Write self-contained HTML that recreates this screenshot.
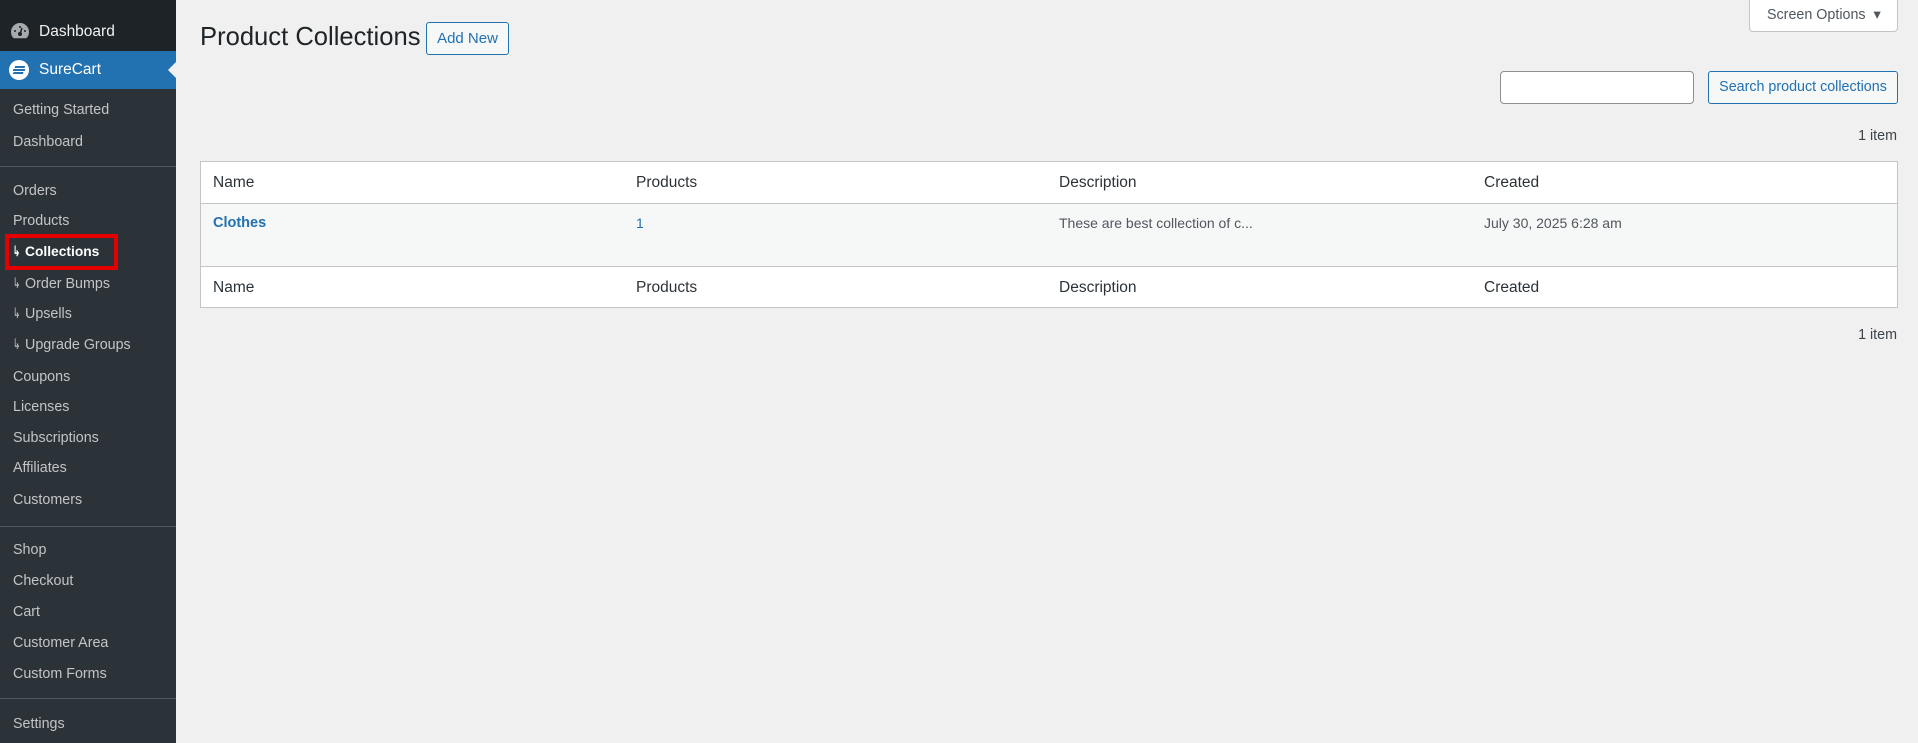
<!DOCTYPE html>
<html><head><meta charset="utf-8"><style>
*{box-sizing:border-box;margin:0;padding:0}
body{width:1918px;height:743px;overflow:hidden;background:#f0f0f1;font-family:"Liberation Sans",sans-serif;position:relative;color:#3c434a}
#sb{position:absolute;left:0;top:0;width:176px;height:743px;background:#2c3338}
#top{position:absolute;left:0;top:0;width:176px;height:51px;background:#1d2327}
.t{position:absolute;font-size:16px;white-space:nowrap}
.m{position:absolute;left:13px;font-size:14.3px;color:#c3c4c7;white-space:nowrap;transform:translateY(-50%)}
.a{display:inline-block;transform:scaleX(0.6);transform-origin:left;width:12px}
.sep{position:absolute;left:0;width:176px;height:1px;background:#50575e}
.c{position:absolute;font-size:16px;transform:translateY(-50%);white-space:nowrap}
</style></head><body>
<div id="sb"></div><div id="top"></div>
<svg style="position:absolute;left:10px;top:22px" width="20" height="18" viewBox="0 0 20 18"><path d="M10 1A9 9 0 0 0 1 10c0 2.5 1 4.7 2.6 6.3h12.8A9 9 0 0 0 19 10 9 9 0 0 0 10 1z" fill="#a7aaad"/><circle cx="10" cy="12" r="2" fill="#1d2327"/><path d="M10 12l2-6" stroke="#1d2327" stroke-width="1.5"/><circle cx="5" cy="9" r="1" fill="#1d2327"/><circle cx="15" cy="9" r="1" fill="#1d2327"/><circle cx="10" cy="5" r="1" fill="#1d2327"/></svg>
<div class="t" style="left:39px;top:23px;color:#f0f0f1;font-size:15.5px">Dashboard</div>
<div style="position:absolute;left:0;top:51px;width:176px;height:38px;background:#2271b1"></div>
<svg style="position:absolute;left:8px;top:59px" width="22" height="22" viewBox="0 0 22 22"><circle cx="11" cy="11" r="10" fill="#fff"/><path d="M6 8h10M5 11h12M6 14h10" stroke="#2271b1" stroke-width="2" transform="skewX(-15) translate(3 0)"/></svg>
<div class="t" style="left:39px;top:61px;color:#fff;font-size:15.5px">SureCart</div>
<div style="position:absolute;left:168px;top:62px;width:0;height:0;border-top:8px solid transparent;border-bottom:8px solid transparent;border-right:8px solid #f0f0f1"></div>
<div class="m" style="top:110px">Getting Started</div>
<div class="m" style="top:142px">Dashboard</div>
<div class="sep" style="top:166px"></div>
<div class="m" style="top:191px">Orders</div>
<div class="m" style="top:221px">Products</div>
<div class="m" style="top:252px;color:#fff;font-weight:bold;font-size:13.8px"><span class="a">↳</span>Collections</div>
<div style="position:absolute;left:5px;top:234px;width:113px;height:36px;border:4px solid #e50000"></div>
<div class="m" style="top:284px"><span class="a">↳</span>Order Bumps</div>
<div class="m" style="top:314px"><span class="a">↳</span>Upsells</div>
<div class="m" style="top:345px"><span class="a">↳</span>Upgrade Groups</div>
<div class="m" style="top:377px">Coupons</div>
<div class="m" style="top:407px">Licenses</div>
<div class="m" style="top:438px">Subscriptions</div>
<div class="m" style="top:468px">Affiliates</div>
<div class="m" style="top:500px">Customers</div>
<div class="sep" style="top:526px"></div>
<div class="m" style="top:550px">Shop</div>
<div class="m" style="top:581px">Checkout</div>
<div class="m" style="top:612px">Cart</div>
<div class="m" style="top:643px">Customer Area</div>
<div class="m" style="top:674px">Custom Forms</div>
<div class="sep" style="top:698px"></div>
<div class="m" style="top:724px">Settings</div>

<div class="t" style="left:200px;top:23px;font-size:25.6px;color:#1d2327">Product Collections</div>
<div style="position:absolute;left:426px;top:22px;width:83px;height:33px;border:1px solid #2271b1;border-radius:3px;background:#f6f7f7;color:#2271b1;font-size:15px;text-align:center;line-height:31px">Add New</div>
<div style="position:absolute;left:1749px;top:-1px;width:149px;height:33px;border:1px solid #c3c4c7;border-radius:0 0 4px 4px;background:#fff;color:#50575e;font-size:14.3px;line-height:31px;padding-left:17px">Screen Options &nbsp;▾</div>
<div style="position:absolute;left:1500px;top:71px;width:194px;height:33px;border:1px solid #8c8f94;border-radius:4px;background:#fff"></div>
<div style="position:absolute;left:1708px;top:71px;width:190px;height:33px;border:1px solid #2271b1;border-radius:3px;background:#f6f7f7;color:#2271b1;font-size:14.3px;text-align:center;line-height:31px">Search product collections</div>
<div class="t" style="right:21px;top:128px;font-size:14.3px">1 item</div>
<div style="position:absolute;left:200px;top:161px;width:1698px;height:147px;border:1px solid #c3c4c7;background:#fff">
<div style="position:absolute;left:0;top:41px;width:100%;height:64px;background:#f6f7f7;border-top:1px solid #c3c4c7;border-bottom:1px solid #c3c4c7"></div>
</div>
<div class="c" style="left:213px;top:183px;color:#2c3338;font-size:15.5px">Name</div>
<div class="c" style="left:636px;top:183px;color:#2c3338;font-size:15.5px">Products</div>
<div class="c" style="left:1059px;top:183px;color:#2c3338;font-size:15.5px">Description</div>
<div class="c" style="left:1484px;top:183px;color:#2c3338;font-size:15.5px">Created</div>
<div class="c" style="left:213px;top:223px;color:#2271b1;font-weight:bold;font-size:14.5px">Clothes</div>
<div class="c" style="left:636px;top:223px;color:#2271b1;font-size:14px">1</div>
<div class="c" style="left:1059px;top:223px;font-size:14px;color:#50575e">These are best collection of c...</div>
<div class="c" style="left:1484px;top:223px;font-size:14px;color:#50575e">July 30, 2025 6:28 am</div>
<div class="c" style="left:213px;top:288px;color:#2c3338;font-size:15.5px">Name</div>
<div class="c" style="left:636px;top:288px;color:#2c3338;font-size:15.5px">Products</div>
<div class="c" style="left:1059px;top:288px;color:#2c3338;font-size:15.5px">Description</div>
<div class="c" style="left:1484px;top:288px;color:#2c3338;font-size:15.5px">Created</div>
<div class="t" style="right:21px;top:327px;font-size:14.3px">1 item</div>
</body></html>
